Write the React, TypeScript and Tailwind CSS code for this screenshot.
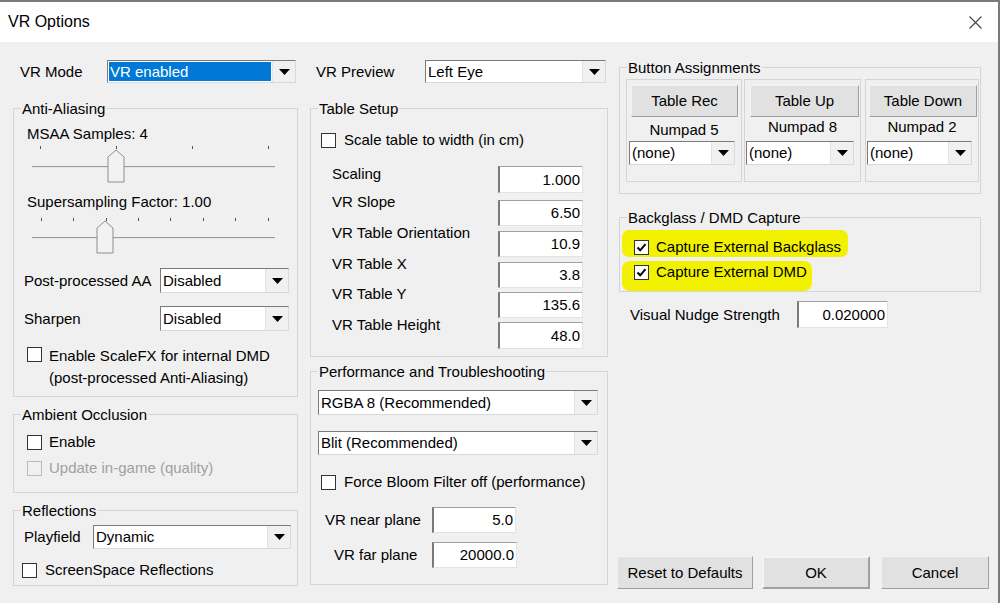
import type { ReactNode } from "react";

function Arrow() {
  return (
    <svg width="11" height="6" viewBox="0 0 11 6">
      <polygon points="0,0 11,0 5.5,6" fill="#000" />
    </svg>
  );
}

function Combo({
  value,
  className,
  selected,
}: {
  value: string;
  className: string;
  selected?: boolean;
}) {
  return (
    <div
      className={`flex bg-white border border-t-[#7a7a7a] border-l-[#7a7a7a] border-r-[#d9d9d9] border-b-[#d9d9d9] ${className}`}
    >
      {selected ? (
        <div className="flex-1 flex items-center m-[1px] pl-[1px] bg-[#0078d7] text-white">{value}</div>
      ) : (
        <div className="flex-1 flex items-center pl-[2px]">{value}</div>
      )}
      <div className="w-[23px] flex items-center justify-center bg-[#f0f0f0] border-l border-[#e3e3e3]">
        <Arrow />
      </div>
    </div>
  );
}

function Edit({ value, className }: { value: string; className: string }) {
  return (
    <div
      className={`flex items-center justify-end pr-[2px] bg-white border-t border-l-2 border-r border-b border-t-[#a0a0a0] border-l-[#7a7a7a] border-r-[#e3e3e3] border-b-[#e3e3e3] ${className}`}
    >
      {value}
    </div>
  );
}

function Check({ checked, disabled }: { checked?: boolean; disabled?: boolean }) {
  return (
    <div
      className={
        disabled
          ? "w-[15px] h-[15px] shrink-0 border border-[#bcbcbc] bg-[#f0f0f0]"
          : "w-[15px] h-[15px] shrink-0 border border-[#333] bg-white flex items-center justify-center"
      }
    >
      {checked && (
        <svg width="11" height="11" viewBox="0 0 11 11">
          <polyline points="1.5,5.5 4.2,8.3 9.5,2.2" fill="none" stroke="#000" strokeWidth="2" />
        </svg>
      )}
    </div>
  );
}

function Btn({ children, className }: { children: ReactNode; className: string }) {
  return (
    <div
      className={`flex items-center justify-center bg-[#e1e1e1] border border-t-[#f4f4f4] border-l-[#f4f4f4] border-r-[#a0a0a0] border-b-[#a0a0a0] ${className}`}
    >
      {children}
    </div>
  );
}

function Group({ title, className, children }: { title: string; className: string; children: ReactNode }) {
  return (
    <fieldset className={`border border-[#d5d5d5] flex flex-col ${className}`}>
      <legend className="ml-[7px] px-[1px] leading-[17px]">{title}</legend>
      {children}
    </fieldset>
  );
}

function Slider({ ticks, thumb, trackY, tickY, tipY }: { ticks: number[]; thumb: number; trackY: number; tickY: number; tipY: number }) {
  return (
    <svg width="260" height="42" className="ml-[13px]">
      {ticks.map((x) => (
        <line key={x} x1={x + 0.5} y1={tickY} x2={x + 0.5} y2={tickY + 3} stroke="#555" />
      ))}
      <line x1="5" y1={trackY + 0.5} x2="248" y2={trackY + 0.5} stroke="#9a9a9a" />
      <line x1="5" y1={trackY + 1.5} x2="248" y2={trackY + 1.5} stroke="#e6e6e6" />
      <polygon
        points={`${thumb - 8},${tipY + 7} ${thumb},${tipY} ${thumb + 8},${tipY + 7} ${thumb + 8},${tipY + 32} ${thumb - 8},${tipY + 32}`}
        fill="#f2f2f2"
        stroke="#8e8e8e"
      />
    </svg>
  );
}

export default function App() {
  return (
    <div className="w-[1000px] h-[603px] overflow-hidden flex flex-col bg-[#f0f0f0] border-t-2 border-r-2 border-[#7a7a7a] font-['Liberation_Sans',Arial,sans-serif] text-[15px] leading-[18px] text-black">
      <div className="h-[40px] shrink-0 bg-white flex items-center justify-between pl-[8px] pr-[16px]">
        <span className="text-[16px]">VR Options</span>
        <svg width="13" height="13" viewBox="0 0 13 13">
          <path d="M0.5 0.5 L12.5 12.5 M12.5 0.5 L0.5 12.5" stroke="#444" strokeWidth="1.1" />
        </svg>
      </div>

      <div className="flex-1 flex pl-[13px]">
        {/* left column */}
        <div className="w-[285px] flex flex-col">
          <div className="mt-[18px] h-[23px] flex items-center">
            <div className="w-[94px] pl-[7px]">VR Mode</div>
            <Combo value="VR enabled" selected className="w-[189px] h-[23px]" />
          </div>

          <Group title="Anti-Aliasing" className="mt-[17px] h-[297px]">
            <div className="mt-[8px] ml-[13px]">MSAA Samples: 4</div>
            <Slider ticks={[13, 89, 165, 241]} thumb={89} trackY={23} tickY={3} tipY={7} />
            <div className="mt-[8px] ml-[13px]">Supersampling Factor: 1.00</div>
            <div className="mt-[1px]">
              <Slider ticks={[14, 46, 79, 111, 143, 176, 208, 241]} thumb={78} trackY={25} tickY={6} tipY={9} />
            </div>
            <div className="mt-[14px] h-[25px] flex items-center">
              <div className="ml-[10px] w-[136px]">Post-processed AA</div>
              <Combo value="Disabled" className="w-[129px] h-[25px]" />
            </div>
            <div className="mt-[13px] h-[25px] flex items-center">
              <div className="ml-[10px] w-[136px]">Sharpen</div>
              <Combo value="Disabled" className="w-[129px] h-[25px]" />
            </div>
            <div className="mt-[14px] ml-[13px] flex">
              <div className="mt-[2px]">
                <Check />
              </div>
              <div className="ml-[7px] leading-[22px]">
                Enable ScaleFX for internal DMD
                <br />
                (post-processed Anti-Aliasing)
              </div>
            </div>
          </Group>

          <Group title="Ambient Occlusion" className="mt-[9px] h-[87px]">
            <div className="mt-[8px] ml-[13px] h-[22px] flex items-center">
              <Check />
              <span className="ml-[7px]">Enable</span>
            </div>
            <div className="mt-[4px] ml-[13px] h-[22px] flex items-center">
              <Check disabled />
              <span className="ml-[7px] text-[#a0a0a0]">Update in-game (quality)</span>
            </div>
          </Group>

          <Group title="Reflections" className="mt-[9px] h-[84px]">
            <div className="mt-[6px] h-[24px] flex items-center">
              <div className="ml-[10px] w-[69px]">Playfield</div>
              <Combo value="Dynamic" className="w-[198px] h-[24px]" />
            </div>
            <div className="mt-[10px] ml-[8px] h-[22px] flex items-center">
              <Check />
              <span className="ml-[8px]">ScreenSpace Reflections</span>
            </div>
          </Group>
        </div>

        {/* middle column */}
        <div className="ml-[12px] w-[298px] flex flex-col">
          <div className="mt-[18px] h-[23px] flex items-center">
            <div className="w-[115px] pl-[6px]">VR Preview</div>
            <Combo value="Left Eye" className="w-[181px] h-[23px]" />
          </div>

          <Group title="Table Setup" className="mt-[17px] h-[257px]">
            <div className="mt-[12px] ml-[10px] h-[22px] flex items-center">
              <Check />
              <span className="ml-[8px]">Scale table to width (in cm)</span>
            </div>
            <div className="mt-[14px] flex">
              <div className="ml-[21px] w-[166px] flex flex-col">
                <div>Scaling</div>
                <div className="mt-[10px]">VR Slope</div>
                <div className="mt-[13px]">VR Table Orientation</div>
                <div className="mt-[13px]">VR Table X</div>
                <div className="mt-[12px]">VR Table Y</div>
                <div className="mt-[13px]">VR Table Height</div>
              </div>
              <div className="w-[85px] flex flex-col">
                <Edit value="1.000" className="mt-[1px] h-[27px]" />
                <Edit value="6.50" className="mt-[7px] h-[26px]" />
                <Edit value="10.9" className="mt-[5px] h-[26px]" />
                <Edit value="3.8" className="mt-[5px] h-[26px]" />
                <Edit value="135.6" className="mt-[4px] h-[26px]" />
                <Edit value="48.0" className="mt-[4px] h-[27px]" />
              </div>
            </div>
          </Group>

          <Group title="Performance and Troubleshooting" className="mt-[6px] h-[222px]">
            <Combo value="RGBA 8 (Recommended)" className="mt-[10px] ml-[7px] w-[280px] h-[25px]" />
            <Combo value="Blit (Recommended)" className="mt-[16px] ml-[7px] w-[280px] h-[24px]" />
            <div className="mt-[16px] ml-[10px] h-[22px] flex items-center">
              <Check />
              <span className="ml-[8px]">Force Bloom Filter off (performance)</span>
            </div>
            <div className="mt-[14px] h-[26px] flex items-center">
              <div className="ml-[14px] w-[107px]">VR near plane</div>
              <Edit value="5.0" className="w-[84px] h-[26px]" />
            </div>
            <div className="mt-[9px] h-[26px] flex items-center">
              <div className="ml-[23px] w-[98px]">VR far plane</div>
              <Edit value="20000.0" className="w-[85px] h-[26px]" />
            </div>
          </Group>
        </div>

        {/* right column */}
        <div className="ml-[11px] flex-1 flex flex-col">
          <Group title="Button Assignments" className="mt-[17px] w-[362px] h-[135px]">
            <div className="mt-[3px] ml-[6px] flex">
              <div className="w-[116px] h-[103px] border border-[#d5d5d5] flex flex-col">
                <Btn className="mt-[5px] ml-[4px] w-[107px] h-[32px]">Table Rec</Btn>
                <div className="mt-[1px] h-[23px] flex items-center justify-center">Numpad 5</div>
                <Combo value="(none)" className="ml-[2px] w-[106px] h-[24px]" />
              </div>
              <div className="ml-[2px] w-[117px] h-[103px] border border-[#d5d5d5] flex flex-col">
                <Btn className="mt-[5px] ml-[5px] w-[109px] h-[32px]">Table Up</Btn>
                <div className="h-[20px] flex items-center justify-center">Numpad 8</div>
                <Combo value="(none)" className="mt-[4px] ml-[1px] w-[108px] h-[24px]" />
              </div>
              <div className="ml-[4px] w-[114px] h-[103px] border border-[#d5d5d5] flex flex-col">
                <Btn className="mt-[5px] ml-[3px] w-[108px] h-[32px]">Table Down</Btn>
                <div className="h-[20px] flex items-center justify-center">Numpad 2</div>
                <Combo value="(none)" className="mt-[4px] ml-[1px] w-[105px] h-[24px]" />
              </div>
            </div>
          </Group>

          <Group title="Backglass / DMD Capture" className="mt-[15px] w-[362px] h-[83px]">
            <div className="mt-[4px] ml-[2px] w-[226px] h-[27px] pt-[7px] flex items-center bg-[#f2f200] rounded-[7px]">
              <div className="ml-[12px]">
                <Check checked />
              </div>
              <span className="ml-[7px]">Capture External Backglass</span>
            </div>
            <div className="mt-[4px] ml-[2px] w-[190px] h-[30px] pb-[8px] flex items-center bg-[#f2f200] rounded-[8px]">
              <div className="ml-[12px]">
                <Check checked />
              </div>
              <span className="ml-[7px]">Capture External DMD</span>
            </div>
          </Group>

          <div className="mt-[9px] h-[27px] flex items-center">
            <div className="ml-[11px] w-[167px]">Visual Nudge Strength</div>
            <Edit value="0.020000" className="w-[91px] h-[27px]" />
          </div>

          <div className="mt-auto mb-[14px] -ml-[2px] flex">
            <Btn className="w-[136px] h-[33px]">Reset to Defaults</Btn>
            <Btn className="ml-[9px] w-[108px] h-[33px] border-2 border-[#8a8a8a]">OK</Btn>
            <Btn className="ml-[11px] w-[108px] h-[33px]">Cancel</Btn>
          </div>
        </div>
      </div>
    </div>
  );
}
